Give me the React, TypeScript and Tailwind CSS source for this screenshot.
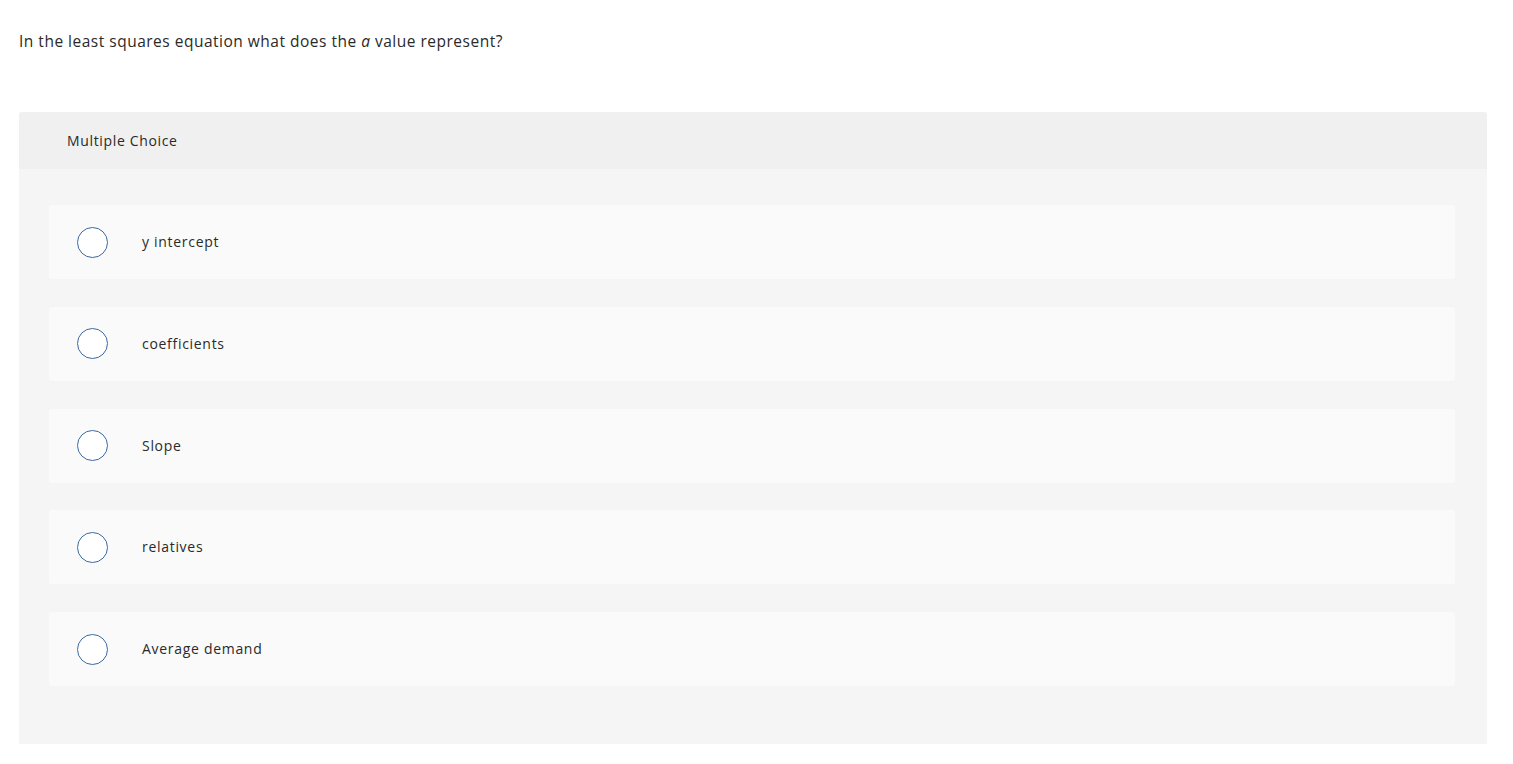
import React from "react";

const options = ["y intercept", "coefficients", "Slope", "relatives", "Average demand"];

export default function App() {
  return (
    <div className="min-h-screen bg-white text-[#1a1a1a]" style={{ fontFamily: "'Open Sans', sans-serif" }}>
      <div className="pl-[19px] pr-[26px] pt-[30px]">
        <p className="text-[15.5px] leading-[22px] font-normal text-[#2a2a2a] tracking-[0.5px]">
          In the least squares equation what does the <i>a</i> value represent?
        </p>
        <div className="mt-[60px] rounded-t-[3px] bg-[#f5f5f5]">
          <div className="flex h-[57px] items-center rounded-t-[3px] bg-[#f0f0f0] pl-[48px] text-[14px] font-normal text-[#2a2a2a] tracking-[0.65px]">
            Multiple Choice
          </div>
          <div className="flex flex-col gap-[27.75px] pl-[30px] pr-[32px] pt-[36px] pb-[58px]">
            {options.map((o) => (
              <div key={o} className="flex h-[74px] items-center rounded-[3px] bg-[#fafafa]">
                <div className="ml-[28px] h-[31px] w-[31px] rounded-full border-[1.5px] border-[#3b6aa0] bg-white" />
                <span className="ml-[34px] -mt-[1px] text-[14px] font-normal text-[#2a2a2a] tracking-[0.7px]">{o}</span>
              </div>
            ))}
          </div>
        </div>
      </div>
    </div>
  );
}
